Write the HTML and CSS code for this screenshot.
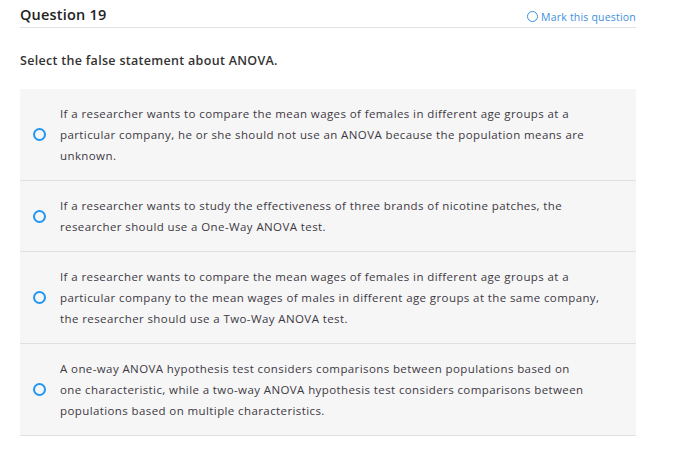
FILE: index.html
```html
<!DOCTYPE html>
<html>
<head>
<meta charset="utf-8">
<link rel="stylesheet" href="styles.css">
</head>
<body>
<div class="page">
  <div class="header">
    <h2 class="title">Question 19</h2>
    <a class="mark"><span class="mark-ring"></span>Mark this question</a>
  </div>
  <p class="prompt">Select the false statement about ANOVA.</p>
  <div class="options">
    <div class="option">
      <span class="radio"></span>
      <div class="text">If a researcher wants to compare the mean wages of females in different age groups at a particular company, he or she should not use an ANOVA because the population means are unknown.</div>
    </div>
    <div class="option">
      <span class="radio"></span>
      <div class="text">If a researcher wants to study the effectiveness of three brands of nicotine patches, the researcher should use a One-Way ANOVA test.</div>
    </div>
    <div class="option">
      <span class="radio"></span>
      <div class="text">If a researcher wants to compare the mean wages of females in different age groups at a particular company to the mean wages of males in different age groups at the same company, the researcher should use a Two-Way ANOVA test.</div>
    </div>
    <div class="option">
      <span class="radio"></span>
      <div class="text">A one-way ANOVA hypothesis test considers comparisons between populations based on one&nbsp;characteristic, while a two-way ANOVA hypothesis test considers comparisons between populations based on multiple characteristics.</div>
    </div>
  </div>
</div>
</body>
</html>
```

FILE: styles.css
```css
html, body {
  margin: 0;
  padding: 0;
  background: #ffffff;
}
body {
  font-family: "Open Sans", Lato, sans-serif;
  color: #333;
}
.page {
  width: 616px;
  margin-left: 20px;
}
.header {
  display: flex;
  justify-content: space-between;
  align-items: center;
  height: 27px;
  border-bottom: 1px solid #e2e2e2;
}
.title {
  margin: 0;
  font-size: 14.5px;
  font-weight: 600;
  letter-spacing: 0.2px;
  color: #222;
  padding-top: 1px;
}
.mark {
  display: flex;
  align-items: center;
  gap: 3px;
  font-size: 10.5px;
  letter-spacing: 0.2px;
  color: #3d8fe0;
  padding-top: 6px;
}
.mark-ring {
  width: 9px;
  height: 9px;
  border: 1.5px solid #3d8fe0;
  border-radius: 50%;
}
.prompt {
  margin: 0;
  padding-top: 24px;
  height: 37px;
  font-size: 12.5px;
  font-weight: 600;
  letter-spacing: 0.3px;
  color: #333;
}
.options {
  background: #f6f6f6;
}
.option {
  display: flex;
  align-items: center;
  padding: 14px 20px 14px 13px;
  border-bottom: 1px solid #e0e0e0;
}
.radio {
  flex: none;
  width: 9px;
  height: 9px;
  border: 2px solid #2196f3;
  border-radius: 50%;
  margin-right: 14px;
}
.text {
  font-size: 11.5px;
  letter-spacing: 0.4px;
  line-height: 21px;
  color: #3d3944;
}
```
